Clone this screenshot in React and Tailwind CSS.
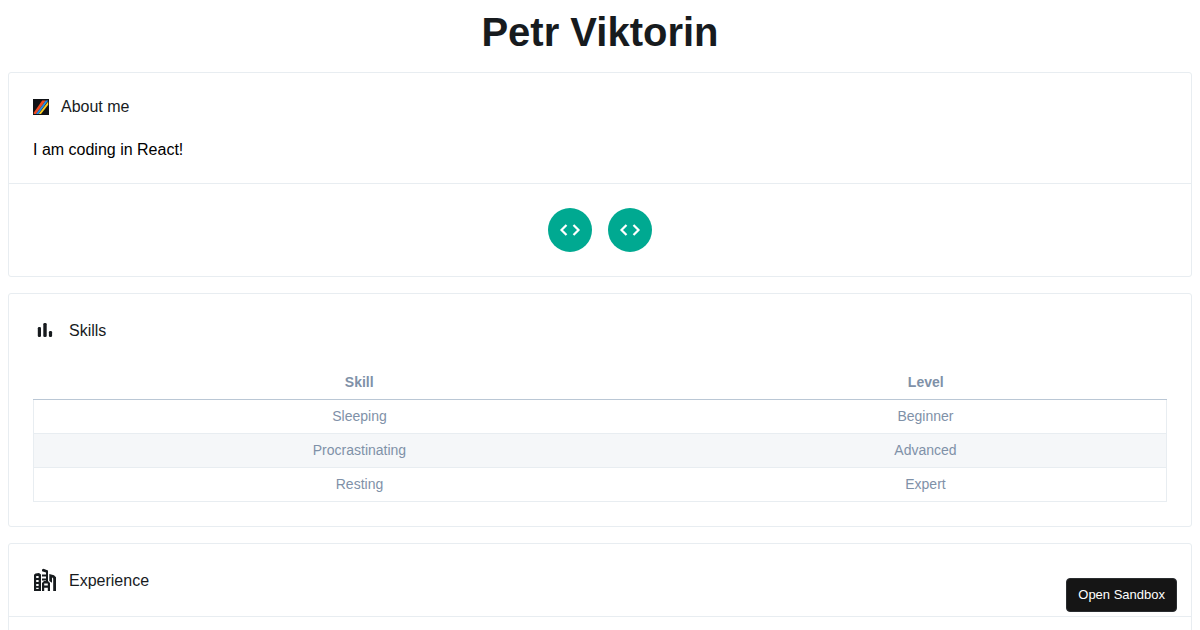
import React from "react";

const skills = [
  { skill: "Sleeping", level: "Beginner" },
  { skill: "Procrastinating", level: "Advanced" },
  { skill: "Resting", level: "Expert" },
];

function StripesIcon() {
  return (
    <svg viewBox="0 0 16 16" className="size-4" aria-hidden="true">
      <rect width="16" height="16" fill="#101216" />
      <path d="M.5 14 9.2 1.5h3.6L3 15H1Z" fill="#ef4a22" />
      <path d="M3 15 12.8 1.5H15.2L5.4 15Z" fill="#2390ea" />
      <path d="M5.6 15 15.2 2.6v3.2L8 15Z" fill="#fccb22" />
    </svg>
  );
}

function ChartIcon() {
  return (
    <svg viewBox="0 0 24 24" className="size-6" fill="currentColor" aria-hidden="true">
      <rect x="4.8" y="9" width="3.2" height="10" rx="1.3" />
      <rect x="10.3" y="5" width="3.4" height="14" rx="1.3" />
      <rect x="15.9" y="13" width="3.2" height="6" rx="1.3" />
    </svg>
  );
}

function CityIcon() {
  return (
    <svg viewBox="0 0 24 24" className="size-6" fill="currentColor" aria-hidden="true">
      <path
        fillRule="evenodd"
        d="M1 6.8 2.5 5.4 6 5 8 6.5V23H1ZM3.2 8V10H5.6V8ZM3.2 12V14H5.6V12ZM3.2 16V18H5.6V16ZM3.2 19.7V21H5.6V19.7Z"
      />
      <path d="M9 1.6 10.5.8 15 2.6V14.2H13V12.5H9V10.5H13V8.5H9V6.5H13V4.5L9 3.2Z" />
      <path
        fillRule="evenodd"
        d="M9 15 11 13H15L17 15V23H14.8V19.8H11.2V23H9ZM11.2 15.6V17.4H14.8V15.6Z"
      />
      <path d="M16.3 6 21 7.2 23 9.3V23H20.2V10.5L19 9.2V14.8L16.3 13Z" />
    </svg>
  );
}

function CodeButton({ label }) {
  return (
    <button
      type="button"
      aria-label={label}
      className="flex size-11 items-center justify-center rounded-full bg-[#00a991] text-white"
    >
      <svg viewBox="0 0 24 24" className="size-6" fill="none" stroke="currentColor" strokeWidth="2.2" aria-hidden="true">
        <path d="M8.5 7 3.5 12l5 5M15.5 7l5 5-5 5" />
      </svg>
    </button>
  );
}

function Card({ children }) {
  return <section className="rounded-[3px] border border-[#e8edf1] bg-white">{children}</section>;
}

export default function App() {
  return (
    <div className="min-h-screen bg-white font-['Liberation_Sans',Arial,sans-serif] text-[#171b1e]">
      <h1 className="pt-2 text-center text-[40px] leading-12 font-bold">Petr Viktorin</h1>
      <main className="flex flex-col gap-4 px-2 pt-4">
        <Card>
          <div className="p-6">
            <h2 className="flex h-5 items-center gap-3 text-base leading-5">
              <StripesIcon />
              About me
            </h2>
            <p className="pt-6 text-base leading-[18px] text-black">I am coding in React!</p>
          </div>
          <div className="flex justify-center gap-4 border-t border-[#e8edf1] p-6">
            <CodeButton label="View code" />
            <CodeButton label="View source" />
          </div>
        </Card>
        <Card>
          <div className="p-6">
            <h2 className="flex h-6 items-center gap-3 text-base leading-[25px]">
              <ChartIcon />
              Skills
            </h2>
            <table className="mt-6 w-full border-collapse text-center text-sm leading-[17px] text-[#7f91a8]">
              <thead>
                <tr className="border-b border-[#bac7d5]">
                  <th className="w-[57.5%] px-3 py-2 font-bold">Skill</th>
                  <th className="px-3 py-2 font-bold">Level</th>
                </tr>
              </thead>
              <tbody className="border-x border-b border-[#e8edf1]">
                {skills.map((row) => (
                  <tr key={row.skill} className="border-b border-[#e8edf1] even:bg-[#f5f7f9]">
                    <td className="px-3 py-2">{row.skill}</td>
                    <td className="px-3 py-2">{row.level}</td>
                  </tr>
                ))}
              </tbody>
            </table>
          </div>
        </Card>
        <Card>
          <div className="p-6">
            <h2 className="flex h-6 items-center gap-3 text-base leading-[25px]">
              <CityIcon />
              Experience
            </h2>
          </div>
          <div className="border-t border-[#e8edf1] p-6" />
        </Card>
      </main>
      <button
        type="button"
        className="fixed right-[23px] bottom-[18px] rounded border border-[#2a2d30] bg-[#151515] px-[11px] py-2 text-[13px] leading-4 text-white"
      >
        Open Sandbox
      </button>
    </div>
  );
}
